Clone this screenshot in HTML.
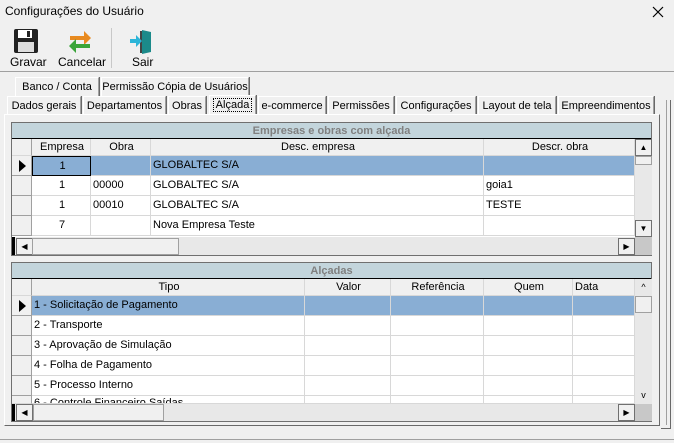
<!DOCTYPE html><html><head><meta charset="utf-8"><style>
*{box-sizing:border-box;margin:0;padding:0}
body{width:674px;height:443px;background:#f0f0f0;font-family:"Liberation Sans",sans-serif;font-size:11px;color:#000;position:relative;overflow:hidden}
.a{position:absolute}
.tab{position:absolute;height:19px;border:1px solid #fff;border-right:1px solid #a0a0a0;border-bottom:none;background:#f0f0f0;font-size:11px;padding:3px 0 0 0;text-align:center;white-space:nowrap;box-shadow:1px 0 0 #696969}
.grid{position:absolute;border:1px solid #707070;background:#fff}
.cap{position:absolute;left:0;right:0;top:0;height:16px;background:#c3d5dc;color:#808080;font-weight:bold;text-align:center;font-size:11px;line-height:16px;border-bottom:1px solid #000}
.cell{position:absolute;height:20px;border-right:1px solid #d8d8d8;border-bottom:1px solid #d8d8d8;line-height:19px;padding-left:2px;white-space:nowrap;overflow:hidden}
.h{background:#f0f0f0;text-align:center;border-right:1px solid #d8d8d8;border-bottom:1px solid #d8d8d8;height:17px;line-height:16px}
.ind{background:#f0f0f0;border-right:1px solid #a0a0a0}
.sel{background:#89aed4}
.sb{position:absolute;background:#e8e8e8}
.btn{position:absolute;width:17px;height:17px;background:#f0f0f0;border:1px solid #707070;font-size:8px;text-align:center;line-height:15px}
</style></head><body>
<div class="a" style="left:5px;top:4px;font-size:12px">Configurações do Usuário</div>
<svg class="a" style="left:652px;top:6px" width="12" height="12"><path d="M1 1L11 11M11 1L1 11" stroke="#000" stroke-width="1.2"/></svg>
<svg class="a" style="left:13px;top:28px" width="26" height="26"><rect x="1" y="1" width="24" height="24" rx="2" fill="#222"/><rect x="5" y="2" width="14" height="8" fill="#fff"/><rect x="14" y="3" width="3" height="6" fill="#222"/><rect x="5" y="14" width="16" height="10" fill="#ddd"/></svg>
<svg class="a" style="left:67px;top:28px" width="26" height="26"><path d="M3 8h14v-5l7 7-7 7v-5H3z" fill="#e88a20"/><path d="M23 16H9v-5l-7 7 7 7v-5h14z" fill="#3aa53a"/></svg>
<div class="a" style="left:111px;top:28px;width:1px;height:40px;background:#c8c8c8"></div>
<svg class="a" style="left:128px;top:28px" width="26" height="26"><path d="M14 2l9 2v20l-9 2z" fill="#1b8a8a"/><rect x="12" y="3" width="2" height="22" fill="#444"/><path d="M2 11h6v-4l6 6-6 6v-4H2z" fill="#2cb5d8"/></svg>
<div class="a" style="left:10px;top:55px;font-size:12px">Gravar</div>
<div class="a" style="left:58px;top:55px;font-size:12px">Cancelar</div>
<div class="a" style="left:132px;top:55px;font-size:12px">Sair</div>
<div class="a" style="left:0;top:71px;width:674px;height:1px;background:#a0a0a0"></div>
<div class="tab" style="left:15px;top:77px;width:84px">Banco / Conta</div>
<div class="tab" style="left:101px;top:77px;width:148px">Permissão Cópia de Usuários</div>
<div class="tab" style="left:7px;top:96px;width:74px">Dados gerais</div>
<div class="tab" style="left:83px;top:96px;width:83px">Departamentos</div>
<div class="tab" style="left:168px;top:96px;width:38px">Obras</div>
<div class="tab" style="left:209px;top:95px;width:47px;height:20px"><span style="outline:1px dotted #000;padding:0 2px">Alçada</span></div>
<div class="tab" style="left:258px;top:96px;width:68px">e-commerce</div>
<div class="tab" style="left:328px;top:96px;width:66px">Permissões</div>
<div class="tab" style="left:396px;top:96px;width:80px">Configurações</div>
<div class="tab" style="left:478px;top:96px;width:78px">Layout de tela</div>
<div class="tab" style="left:558px;top:96px;width:96px">Empreendimentos</div>
<div class="a" style="left:4px;top:114px;width:656px;height:312px;border:1px solid #fff;border-right:1px solid #696969;border-bottom:1px solid #696969"></div>
<div class="a" style="left:661px;top:100px;width:10px;height:329px;border-right:1px solid #696969;border-bottom:1px solid #696969"></div>
<div class="a" style="left:666px;top:100px;width:1px;height:325px;background:#a0a0a0"></div>
<div class="a" style="left:0;top:439px;width:674px;height:1px;background:#a0a0a0"></div>
<div class="grid" style="left:11px;top:122px;width:641px;height:134px">
<div class="cap">Empresas e obras com alçada</div>
<div class="cell h ind" style="left:0;top:16px;width:20px"></div>
<div class="cell h" style="left:20px;top:16px;width:59px">Empresa</div>
<div class="cell h" style="left:79px;top:16px;width:60px">Obra</div>
<div class="cell h" style="left:139px;top:16px;width:333px">Desc. empresa</div>
<div class="cell h" style="left:472px;top:16px;width:151px">Descr. obra</div>
<div class="cell ind" style="left:0;top:33px;width:20px;border-bottom:1px solid #a0a0a0"><svg width="8" height="12" style="margin:4px 0 0 5px"><path d="M0 0L7 6L0 12z"/></svg></div>
<div class="cell sel" style="left:20px;top:33px;width:59px;text-align:center;border:1px solid #000">1</div>
<div class="cell sel" style="left:79px;top:33px;width:60px"></div>
<div class="cell sel" style="left:139px;top:33px;width:333px">GLOBALTEC S/A</div>
<div class="cell sel" style="left:472px;top:33px;width:151px"></div>
<div class="cell ind" style="left:0;top:53px;width:20px;border-bottom:1px solid #a0a0a0"></div>
<div class="cell" style="left:20px;top:53px;width:59px;text-align:center">1</div>
<div class="cell" style="left:79px;top:53px;width:60px">00000</div>
<div class="cell" style="left:139px;top:53px;width:333px">GLOBALTEC S/A</div>
<div class="cell" style="left:472px;top:53px;width:151px">goia1</div>
<div class="cell ind" style="left:0;top:73px;width:20px;border-bottom:1px solid #a0a0a0"></div>
<div class="cell" style="left:20px;top:73px;width:59px;text-align:center">1</div>
<div class="cell" style="left:79px;top:73px;width:60px">00010</div>
<div class="cell" style="left:139px;top:73px;width:333px">GLOBALTEC S/A</div>
<div class="cell" style="left:472px;top:73px;width:151px">TESTE</div>
<div class="cell ind" style="left:0;top:93px;width:20px;border-bottom:1px solid #a0a0a0"></div>
<div class="cell" style="left:20px;top:93px;width:59px;text-align:center">7</div>
<div class="cell" style="left:79px;top:93px;width:60px"></div>
<div class="cell" style="left:139px;top:93px;width:333px">Nova Empresa Teste</div>
<div class="cell" style="left:472px;top:93px;width:151px"></div>
<div class="sb" style="left:623px;top:16px;width:17px;height:98px"></div>
<div class="btn" style="left:623px;top:16px">▲</div>
<div class="btn" style="left:623px;top:33px;height:9px;border-color:#a0a0a0"></div>
<div class="btn" style="left:623px;top:97px">▼</div>
<div class="sb" style="left:0;top:114px;width:640px;height:18px"></div>
<div class="a" style="left:0;top:114px;width:3px;height:18px;background:#000"></div>
<div class="btn" style="left:4px;top:115px">◀</div>
<div class="a" style="left:20px;top:115px;width:147px;height:17px;background:#f0f0f0;border:1px solid #a0a0a0"></div>
<div class="btn" style="left:606px;top:115px">▶</div>
<div class="a" style="left:623px;top:114px;width:17px;height:18px;background:#c8c8c8"></div>
</div>
<div class="grid" style="left:11px;top:262px;width:641px;height:160px">
<div class="cap">Alçadas</div>
<div class="cell h ind" style="left:0;top:16px;width:20px"></div>
<div class="cell h" style="left:20px;top:16px;width:273px">Tipo</div>
<div class="cell h" style="left:293px;top:16px;width:86px">Valor</div>
<div class="cell h" style="left:379px;top:16px;width:93px">Referência</div>
<div class="cell h" style="left:472px;top:16px;width:89px">Quem</div>
<div class="cell h" style="left:561px;top:16px;width:62px;text-align:left">Data</div>
<div class="cell ind" style="left:0;top:33px;width:20px;border-bottom:1px solid #a0a0a0"><svg width="8" height="12" style="margin:4px 0 0 5px"><path d="M0 0L7 6L0 12z"/></svg></div>
<div class="cell sel" style="left:20px;top:33px;width:273px">1 - Solicitação de Pagamento</div>
<div class="cell sel" style="left:293px;top:33px;width:86px"></div>
<div class="cell sel" style="left:379px;top:33px;width:93px"></div>
<div class="cell sel" style="left:472px;top:33px;width:89px"></div>
<div class="cell sel" style="left:561px;top:33px;width:62px"></div>
<div class="cell ind" style="left:0;top:53px;width:20px;border-bottom:1px solid #a0a0a0"></div>
<div class="cell" style="left:20px;top:53px;width:273px">2 - Transporte</div>
<div class="cell" style="left:293px;top:53px;width:86px"></div><div class="cell" style="left:379px;top:53px;width:93px"></div><div class="cell" style="left:472px;top:53px;width:89px"></div><div class="cell" style="left:561px;top:53px;width:62px"></div>
<div class="cell ind" style="left:0;top:73px;width:20px;border-bottom:1px solid #a0a0a0"></div>
<div class="cell" style="left:20px;top:73px;width:273px">3 - Aprovação de Simulação</div>
<div class="cell" style="left:293px;top:73px;width:86px"></div><div class="cell" style="left:379px;top:73px;width:93px"></div><div class="cell" style="left:472px;top:73px;width:89px"></div><div class="cell" style="left:561px;top:73px;width:62px"></div>
<div class="cell ind" style="left:0;top:93px;width:20px;border-bottom:1px solid #a0a0a0"></div>
<div class="cell" style="left:20px;top:93px;width:273px">4 - Folha de Pagamento</div>
<div class="cell" style="left:293px;top:93px;width:86px"></div><div class="cell" style="left:379px;top:93px;width:93px"></div><div class="cell" style="left:472px;top:93px;width:89px"></div><div class="cell" style="left:561px;top:93px;width:62px"></div>
<div class="cell ind" style="left:0;top:113px;width:20px;border-bottom:1px solid #a0a0a0"></div>
<div class="cell" style="left:20px;top:113px;width:273px">5 - Processo Interno</div>
<div class="cell" style="left:293px;top:113px;width:86px"></div><div class="cell" style="left:379px;top:113px;width:93px"></div><div class="cell" style="left:472px;top:113px;width:89px"></div><div class="cell" style="left:561px;top:113px;width:62px"></div>
<div class="cell ind" style="left:0;top:133px;width:20px;height:8px"></div>
<div class="cell" style="left:20px;top:133px;width:273px;height:8px;line-height:14px">6 - Controle Financeiro Saídas</div>
<div class="cell" style="left:293px;top:133px;width:86px;height:8px"></div><div class="cell" style="left:379px;top:133px;width:93px;height:8px"></div><div class="cell" style="left:472px;top:133px;width:89px;height:8px"></div><div class="cell" style="left:561px;top:133px;width:62px;height:8px"></div>
<div class="sb" style="left:623px;top:16px;width:17px;height:125px"></div>
<div class="a" style="left:623px;top:16px;width:17px;height:17px;text-align:center;font-size:9px;line-height:17px">^</div>
<div class="btn" style="left:623px;top:33px;height:17px;border-color:#a0a0a0"></div>
<div class="a" style="left:623px;top:124px;width:17px;height:17px;text-align:center;font-size:9px;line-height:17px">v</div>
<div class="sb" style="left:0;top:141px;width:640px;height:17px"></div>
<div class="a" style="left:0;top:141px;width:3px;height:17px;background:#000"></div>
<div class="btn" style="left:4px;top:141px">◀</div>
<div class="a" style="left:21px;top:141px;width:131px;height:17px;background:#f0f0f0;border:1px solid #a0a0a0"></div>
<div class="btn" style="left:606px;top:141px">▶</div>
<div class="a" style="left:623px;top:141px;width:17px;height:17px;background:#c8c8c8"></div>
</div>
</body></html>
